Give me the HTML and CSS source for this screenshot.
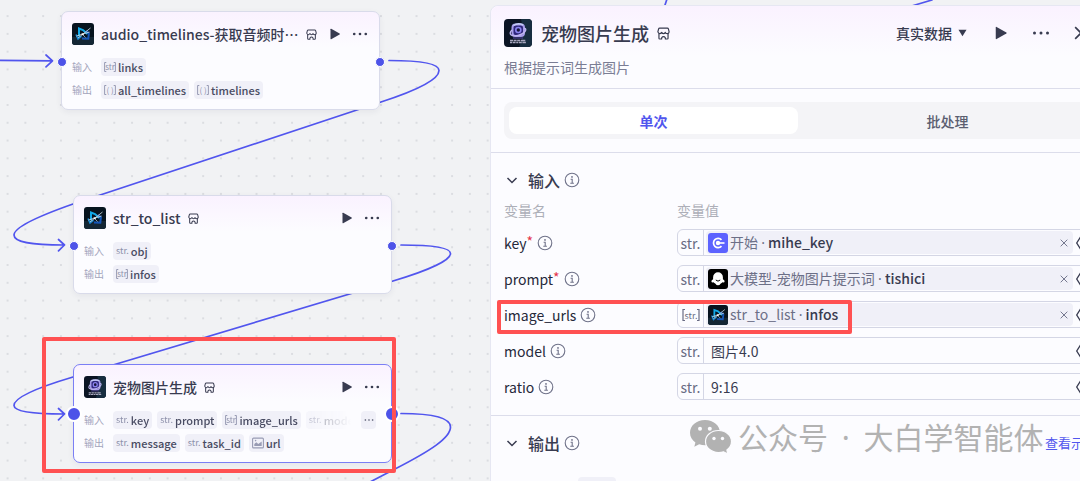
FILE: index.html
```html
<!DOCTYPE html>
<html lang="zh-CN">
<head>
    <meta charset="UTF-8">
    <title>宠物图片生成</title>
    <link rel="stylesheet" href="styles.css">
</head>
<body>
    <svg class="symbols" aria-hidden="true">
        <symbol id="store" viewBox="0 0 12 12">
            <path d="M2.500 1h7q.8 0 1 .8l.7 2.700Q11 6.200 9.500 6.200T7.700 5Q7 6.200 6 6.200T4.300 5Q3.500 6.200 2.500 6.200T.8 4.500l.7-2.700Q1.700 1 2.500 1z" fill="none" stroke="currentColor" stroke-width="1.100" stroke-linejoin="round"/>
            <path d="M1.800 6.300v4q0 .8.8.8h1.700V9.900q.7-1.100 1.700-1.100t1.700 1.100v1.200h1.700q.8 0 .8-.8v-4" fill="none" stroke="currentColor" stroke-width="1.100" stroke-linejoin="round"/>
        </symbol>
        <symbol id="play" viewBox="0 0 12 12">
            <path d="M1.500 1.200v9.600q0 .7.700.4l8.400-4.700q.7-.5 0-1L2.200.8q-.7-.3-.7.4z" fill="currentColor"/>
        </symbol>
        <symbol id="dots" viewBox="0 0 18 6">
            <g fill="currentColor"><circle cx="2.500" cy="3" r="1.500"/><circle cx="9" cy="3" r="1.500"/><circle cx="15.500" cy="3" r="1.500"/></g>
        </symbol>
        <symbol id="info" viewBox="0 0 16 16">
            <circle cx="8" cy="8" r="6.800" fill="none" stroke="currentColor" stroke-width="1.100"/>
            <circle cx="8" cy="4.900" r=".9" fill="currentColor"/>
            <path d="M6.600 7.200H8.200V11M6.300 11.200h3.600" fill="none" stroke="currentColor" stroke-width="1.100"/>
        </symbol>
        <symbol id="chevron" viewBox="0 0 12 12">
            <path d="M1.500 4L6 8.500L10.500 4" fill="none" stroke="currentColor" stroke-width="1.500"/>
        </symbol>
        <symbol id="cross" viewBox="0 0 12 12">
            <path d="M1 1l10 10M11 1L1 11" fill="none" stroke="currentColor" stroke-width="1.400"/>
        </symbol>
        <symbol id="gear" viewBox="0 0 16 16">
            <path d="M4.500 2h7L15.300 8l-3.800 6h-7L.7 8z" fill="none" stroke="currentColor" stroke-width="1.400" stroke-linejoin="round"/>
            <circle cx="8" cy="8" r="2.300" fill="none" stroke="currentColor" stroke-width="1.400"/>
        </symbol>
        <symbol id="image" viewBox="0 0 12 12">
            <rect x=".6" y="1.100" width="10.800" height="9.800" rx="1" fill="none" stroke="currentColor" stroke-width="1.100"/>
            <path d="M2.300 9V7l2-1.800L6.300 7l3.400-2.600V9z" fill="currentColor"/>
            <circle cx="3.600" cy="3.600" r=".8" fill="currentColor"/>
        </symbol>
        <symbol id="brackets" viewBox="0 0 12 12">
            <path d="M2.300 1.500H.6v9h1.700M9.700 1.500h1.700v9H9.700" fill="none" stroke="currentColor"/>
        </symbol>
        <symbol id="cut" viewBox="0 0 22 22">
            <rect width="22" height="22" rx="3" fill="#07131f"/>
            <path d="M0 14h22v5a3 3 0 0 1-3 3H3a3 3 0 0 1-3-3z" fill="#142634"/>
            <path d="M7 13.500L7 5.500l4 1.500 4.500 4" fill="none" stroke="#12a9e8" stroke-width="2"/>
            <path d="M10 15.500l6.300.2.600-5.400-3-2.300" fill="none" stroke="#1455b8" stroke-width="2"/>
            <path d="M4 11.500l2 4.500 3.500-2.800" fill="none" stroke="#1688d4" stroke-width="1.500"/>
            <path d="M18.500 5L6 15M17.500 9L4.500 13" stroke="#d9e6ee" stroke-width=".8"/>
            <path d="M9.500 10.500l4 4" stroke="#a4c3d6" stroke-width=".8"/>
            <circle cx="10.800" cy="11.300" r="1" fill="#fff"/>
        </symbol>
        <symbol id="pet" viewBox="0 0 28 28">
            <rect width="28" height="28" rx="4" fill="#0b1424"/>
            <path d="M17 0h7a4 4 0 0 1 4 4v20a4 4 0 0 1-4 4h-9l5-13z" fill="#172d40"/>
            <rect x="8.500" y="5.500" width="11.500" height="11.500" rx="3" fill="#30277c" stroke="#a69be9" stroke-width="2"/>
            <path d="M8 11C4 15 7 18 14 16.500S24 9 20 9.500" fill="none" stroke="#beb5f0" stroke-width="1.400"/>
            <circle cx="14.300" cy="11" r="2.500" fill="#171437" stroke="#8a82ee" stroke-width="1.600"/>
            <path d="M9.500 6.500Q14 3.500 19 6" fill="none" stroke="#c5cdf7" stroke-width="1.500"/>
            <path d="M6 21.500h3m.6 0h3m.6 0h3m.6 0h4.500M6 23.500h2m.6 0h3m.6 0h2m.6 0h3m.6 0h3.500" stroke="#a6a5bd" stroke-width="1.500"/>
            <path d="M9 19h10" stroke="#5c4cac"/>
        </symbol>
        <symbol id="start" viewBox="0 0 20 20">
            <rect width="20" height="20" rx="3" fill="#5c62ff"/>
            <path d="M13.500 6.900A4.600 4.600 0 1 0 13.500 13.100" fill="none" stroke="#fff" stroke-width="1.700"/>
            <circle cx="10" cy="10" r="2.200" fill="#fff"/>
            <path d="M10 10h6.500" stroke="#fff" stroke-width="1.600"/>
        </symbol>
        <symbol id="llm" viewBox="0 0 20 20">
            <rect width="20" height="20" rx="3" fill="#000"/>
            <path d="M10 3.300a4.900 4.900 0 0 1 4.900 4.900v2q1.800 1 1.700 2.300-.1 1.300-2.100.8-.7 1-2 1.400-.8 1.500-2.500 1.500t-2.500-1.500q-1.300-.4-2-1.400-2 .5-2.100-.8-.1-1.300 1.700-2.300v-2A4.900 4.900 0 0 1 10 3.300z" fill="#fff"/>
            <path d="M7.800 11q2.200 2.300 4.400 0" fill="none" stroke="#000"/>
        </symbol>
    </svg>

    <main class="workspace">
        <section class="canvas">
            <svg class="edges" width="100%" height="100%" aria-hidden="true">
                <defs>
                    <pattern id="grid" x="-1.300" y="7.200" width="17.780" height="17.780" patternUnits="userSpaceOnUse">
                        <circle cx="8.900" cy="8.900" r=".8" fill="#bfc2c9"/>
                    </pattern>
                </defs>
                <rect width="100%" height="100%" fill="url(#grid)"/>
                <g fill="none" stroke="#5155ee" stroke-width="1.700" stroke-linecap="round" stroke-linejoin="round">
                    <path d="M0 60.300L52 60.800M46 55l6.500 5.800-6.500 6"/>
                    <path d="M389 60.500C425 60.500 439 64 439 70.500C439 79 418 90 381 102L73 204C36 217 14 228 14 235C14 242 30 245 64 245M58.500 239.500l6 5.500-6 5.800"/>
                    <path d="M401 245C436 245 450.500 248 450.500 253.500C450.500 260 430 270 393 281L73 377C36 388 14 398 14 405.500C14 411 30 414 64 414M58.500 408.500l6 5.500-6 5.800"/>
                    <path d="M401 413.500C436 413.500 450.500 419 450.500 427C450.500 438 430 451 395 469L370 482"/>
                    <path d="M668-4L664 8M932 0L905 8"/>
                </g>
            </svg>

            <article class="node node-audio">
                <header class="node-header">
                    <svg class="node-icon"><use href="#cut"/></svg>
                    <h3>audio_timelines-获取音频时…</h3>
                    <svg class="store"><use href="#store"/></svg>
                    <button class="node-play" aria-label="运行"><svg><use href="#play"/></svg></button>
                    <button class="node-more" aria-label="更多"><svg><use href="#dots"/></svg></button>
                </header>
                <div class="node-row">
                    <span class="row-name">输入</span>
                    <span class="chip"><svg class="array" viewBox="0 0 12 12"><use href="#brackets"/><text x="6" y="9">str</text></svg>links</span>
                </div>
                <div class="node-row">
                    <span class="row-name">输出</span>
                    <span class="chip"><svg class="array" viewBox="0 0 12 12"><use href="#brackets"/><text x="6" y="9">( )</text></svg>all_timelines</span>
                    <span class="chip"><svg class="array" viewBox="0 0 12 12"><use href="#brackets"/><text x="6" y="9">( )</text></svg>timelines</span>
                </div>
                <i class="port port-in"></i>
                <i class="port port-out"></i>
            </article>

            <article class="node node-list">
                <header class="node-header">
                    <svg class="node-icon"><use href="#cut"/></svg>
                    <h3>str_to_list</h3>
                    <svg class="store"><use href="#store"/></svg>
                    <button class="node-play" aria-label="运行"><svg><use href="#play"/></svg></button>
                    <button class="node-more" aria-label="更多"><svg><use href="#dots"/></svg></button>
                </header>
                <div class="node-row">
                    <span class="row-name">输入</span>
                    <span class="chip"><small>str.</small>obj</span>
                </div>
                <div class="node-row">
                    <span class="row-name">输出</span>
                    <span class="chip"><svg class="array" viewBox="0 0 12 12"><use href="#brackets"/><text x="6" y="9">str</text></svg>infos</span>
                </div>
                <i class="port port-in"></i>
                <i class="port port-out"></i>
            </article>

            <article class="node node-pet selected">
                <header class="node-header">
                    <svg class="node-icon"><use href="#pet"/></svg>
                    <h3>宠物图片生成</h3>
                    <svg class="store"><use href="#store"/></svg>
                    <button class="node-play" aria-label="运行"><svg><use href="#play"/></svg></button>
                    <button class="node-more" aria-label="更多"><svg><use href="#dots"/></svg></button>
                </header>
                <div class="node-row">
                    <span class="row-name">输入</span>
                    <div class="chips-fade">
                        <span class="chip"><small>str.</small>key</span>
                        <span class="chip"><small>str.</small>prompt</span>
                        <span class="chip"><svg class="array" viewBox="0 0 12 12"><use href="#brackets"/><text x="6" y="9">str</text></svg>image_urls</span>
                        <span class="chip faded"><small>str.</small>model</span>
                    </div>
                    <button class="chip chip-more" aria-label="更多变量"><svg><use href="#dots"/></svg></button>
                </div>
                <div class="node-row">
                    <span class="row-name">输出</span>
                    <span class="chip"><small>str.</small>message</span>
                    <span class="chip"><small>str.</small>task_id</span>
                    <span class="chip"><svg class="picture"><use href="#image"/></svg>url</span>
                </div>
                <i class="port port-in"></i>
                <i class="port port-out"></i>
            </article>

            <div class="mark mark-node"></div>
        </section>

        <aside class="panel">
            <header class="panel-header">
                <div class="panel-title">
                    <svg class="panel-icon"><use href="#pet"/></svg>
                    <h2>宠物图片生成</h2>
                    <svg class="store"><use href="#store"/></svg>
                    <div class="actions">
                        <div class="mode">
                            <select aria-label="数据模式"><option>真实数据</option></select>
                            <svg class="caret" viewBox="0 0 10 8"><path d="M.5.500h9L5 7.500z" fill="currentColor"/></svg>
                        </div>
                        <button aria-label="运行"><svg class="play"><use href="#play"/></svg></button>
                        <button aria-label="更多"><svg class="dots"><use href="#dots"/></svg></button>
                        <button aria-label="关闭"><svg class="close"><use href="#cross"/></svg></button>
                    </div>
                </div>
                <p>根据提示词生成图片</p>
            </header>

            <div class="tabs-section">
                <div class="tabs">
                    <button class="tab active">单次</button>
                    <button class="tab">批处理</button>
                </div>
            </div>

            <section class="inputs">
                <h4><svg class="chevron"><use href="#chevron"/></svg>输入<svg class="info"><use href="#info"/></svg></h4>
                <div class="field field-head"><span>变量名</span><span>变量值</span></div>
                <div class="field">
                    <label for="key">key<em>*</em><svg class="info"><use href="#info"/></svg></label>
                    <div class="value">
                        <span class="type">str.</span>
                        <div class="ref">
                            <button class="ref-pick" id="key"><svg class="ref-icon"><use href="#start"/></svg><span>开始 <i class="sep">·</i> <b>mihe_key</b></span></button>
                            <button class="clear" aria-label="清除 key"><svg><use href="#cross"/></svg></button>
                        </div>
                        <button class="setting" aria-label="设置"><svg><use href="#gear"/></svg></button>
                    </div>
                </div>
                <div class="field">
                    <label for="prompt">prompt<em>*</em><svg class="info"><use href="#info"/></svg></label>
                    <div class="value">
                        <span class="type">str.</span>
                        <div class="ref">
                            <button class="ref-pick" id="prompt"><svg class="ref-icon"><use href="#llm"/></svg><span>大模型-宠物图片提示词 <i class="sep">·</i> <b>tishici</b></span></button>
                            <button class="clear" aria-label="清除 prompt"><svg><use href="#cross"/></svg></button>
                        </div>
                        <button class="setting" aria-label="设置"><svg><use href="#gear"/></svg></button>
                    </div>
                </div>
                <div class="field">
                    <label for="image_urls">image_urls<svg class="info"><use href="#info"/></svg></label>
                    <div class="value">
                        <span class="type">
                            <svg class="type-array" viewBox="0 0 18 14"><path d="M3 1.500H1v11h2M15 1.500h2v11h-2" fill="none" stroke="currentColor" stroke-width="1.200"/><text x="9" y="11">str.</text></svg>
                        </span>
                        <div class="ref">
                            <button class="ref-pick" id="image_urls"><svg class="ref-icon"><use href="#cut"/></svg><span>str_to_list <i class="sep">·</i> <b>infos</b></span></button>
                            <button class="clear" aria-label="清除 image_urls"><svg><use href="#cross"/></svg></button>
                        </div>
                        <button class="setting" aria-label="设置"><svg><use href="#gear"/></svg></button>
                    </div>
                    <div class="mark mark-field"></div>
                </div>
                <div class="field">
                    <label for="model">model<svg class="info"><use href="#info"/></svg></label>
                    <div class="value">
                        <span class="type">str.</span>
                        <input id="model" type="text" value="图片4.0">
                        <button class="setting" aria-label="设置"><svg><use href="#gear"/></svg></button>
                    </div>
                </div>
                <div class="field">
                    <label for="ratio">ratio<svg class="info"><use href="#info"/></svg></label>
                    <div class="value">
                        <span class="type">str.</span>
                        <input id="ratio" type="text" value="9:16">
                        <button class="setting" aria-label="设置"><svg><use href="#gear"/></svg></button>
                    </div>
                </div>
            </section>

            <section class="outputs">
                <h4><svg class="chevron"><use href="#chevron"/></svg>输出<svg class="info"><use href="#info"/></svg><a href="#">查看示例</a></h4>
                <div class="output-row"><span class="output-type"></span></div>
            </section>

            <div class="watermark">
                <svg viewBox="0 0 42 34">
                    <path d="M15 0C6.500 0 0 5.700 0 12.700c0 4 2.100 7.500 5.400 9.800L4.300 26.800l4.900-2.500q2.800.9 6 .9C23.500 25 30 19.700 30 12.700S23.500 0 15 0z" fill="#b2b2b2"/>
                    <path d="M28.500 10.500c7.300 0 13 4.900 13 11 0 3.400-1.800 6.500-4.600 8.500l.9 4-4.200-2.200q-2.400.7-5.100.7c-7.300 0-13-4.900-13-11s5.700-11 13-11z" fill="#b2b2b2" stroke="#fcfcff" stroke-width="1.200"/>
                    <g fill="#fcfcff"><circle cx="10" cy="8.800" r="2"/><circle cx="19.800" cy="8.800" r="2"/><circle cx="24" cy="18.500" r="1.700"/><circle cx="32.500" cy="18.500" r="1.700"/></g>
                </svg>
                <span>公众号 <i class="sep">·</i> 大白学智能体</span>
            </div>
        </aside>
    </main>
</body>
</html>
```
FILE: styles.css
```css
* {
    box-sizing: border-box;
}

body {
    margin: 0;
    overflow: hidden;
    font-family: "Noto Sans CJK SC", sans-serif;
    font-size: 14px;
    line-height: 20px;
    color: #383b50;
    background-color: #f1f2f4;
}

h2, h3, h4, p {
    margin: 0;
    font-weight: 500;
}

button, input, select {
    margin: 0;
    padding: 0;
    border: none;
    background: none;
    font: inherit;
    color: inherit;
}

button {
    display: flex;
    align-items: center;
    justify-content: center;
    cursor: pointer;
}

svg {
    display: block;
    flex: none;
}

.symbols {
    position: absolute;
    width: 0;
    height: 0;
}

/* the panel column lies over the right part of the canvas */
.workspace {
    display: grid;
    grid-template-columns: 490px 1fr;
    height: 100vh;
    overflow: hidden;
}

.canvas {
    position: relative;
    grid-area: 1 / 1 / 2 / 3;
}

/* nodes */
.node {
    position: absolute;
    width: 319px;
    padding: 11px 10px 10px;
    border: 1px solid #d9dbea;
    border-radius: 7px;
    background: linear-gradient(#faf2ff, #fcfcff 36px);
    box-shadow: 0 2px 6px rgba(30, 35, 70, 0.06);
}

.node-audio {
    left: 61px;
    top: 11px;
}

.node-list {
    left: 73px;
    top: 195px;
}

.node-pet {
    left: 73px;
    top: 364px;
}

.node.selected {
    border-color: #7b7ff5;
}

.node-header {
    display: flex;
    align-items: center;
    height: 22px;
    margin-bottom: 13px;
}

.node-header h3 {
    margin: 0 7px;
    font-size: 14px;
    white-space: nowrap;
}

.node-icon {
    width: 22px;
    height: 22px;
}

.store {
    width: 13px;
    height: 13px;
}

.node-header .store {
    width: 11px;
    height: 11px;
}

.node-play {
    width: 20px;
    margin-left: auto;
}

.node-play svg {
    width: 12px;
    height: 12px;
}

.node-more {
    width: 18px;
    margin: 0 0 0 6px;
}

.node-more svg {
    width: 16px;
    height: 6px;
}

.node-row {
    display: flex;
    align-items: center;
    gap: 5px;
    height: 18px;
}

.node-row + .node-row {
    margin-top: 5px;
}

.row-name {
    width: 24px;
    font-size: 10px;
    color: #a3a5bc;
}

.chip {
    display: flex;
    flex: none;
    align-items: center;
    gap: 2px;
    height: 18px;
    padding: 0 3px;
    border-radius: 4px;
    background-color: #f0f0f8;
    font-size: 11px;
    font-weight: 500;
    color: #484b62;
}

.chip small {
    font-size: 9px;
    font-weight: 400;
    color: #8d90aa;
}

.array {
    width: 12px;
    height: 12px;
    font-size: 8px;
    font-weight: 400;
    text-anchor: middle;
    color: #989bb3;
    fill: #8d90aa;
}

.picture {
    width: 12px;
    height: 12px;
    color: #989bb3;
}

.chips-fade {
    display: flex;
    flex: 1;
    gap: 5px;
    overflow: hidden;
    mask-image: linear-gradient(to right, #000 78%, transparent 98%);
}

.faded {
    opacity: 0.6;
}

.chip-more {
    width: 15px;
    padding: 0;
    margin-right: 5px;
}

.chip-more svg {
    width: 10px;
    height: 6px;
}

.port {
    position: absolute;
    top: 45px;
    width: 10px;
    height: 10px;
    border: 1px solid #fff;
    border-radius: 50%;
    background-color: #4d53e8;
}

.port-in {
    left: -5px;
}

.port-out {
    right: -6px;
}

.selected .port {
    top: 41px;
    width: 16px;
    height: 16px;
    border-width: 2px;
}

.selected .port-in {
    left: -8px;
}

.selected .port-out {
    right: -9px;
}

/* red highlight frames */
.mark {
    position: absolute;
    border: 4px solid #ff5152;
    border-radius: 2px;
    pointer-events: none;
}

.mark-node {
    left: 42px;
    top: 337px;
    width: 354px;
    height: 136px;
}

.mark-field {
    left: -7px;
    top: -1px;
    width: 355px;
    height: 34px;
}

/* settings panel, runs past the right edge of the window */
.panel {
    position: relative;
    grid-area: 1 / 2 / 2 / 3;
    margin: 5px -31px 0 0;
    border: 1px solid #e6e7f2;
    border-radius: 8px 8px 0 0;
    background-color: #fcfcff;
}

.panel-header {
    padding: 13px;
    height: 83px;
    border-bottom: 1px solid #dcddeb;
    border-radius: 8px 8px 0 0;
    background: linear-gradient(#faf2ff, #fcfcff 50px);
}

.panel-title {
    display: flex;
    align-items: center;
    height: 28px;
}

.panel-icon {
    width: 28px;
    height: 28px;
}

.panel-title h2 {
    margin: 0 8px 0 9px;
    font-size: 18px;
}

.panel-header p {
    margin-top: 10px;
    font-size: 14px;
    font-weight: 400;
    color: #7a7d94;
}

.actions {
    display: flex;
    align-items: center;
    gap: 12px;
    margin: 0 2px 0 auto;
}

.mode {
    display: flex;
    align-items: center;
    gap: 6px;
    margin-right: 8px;
}

.mode select {
    appearance: none;
    font-weight: 500;
}

.caret {
    width: 9px;
    height: 8px;
}

.actions button {
    width: 28px;
    height: 28px;
}

.play {
    width: 14px;
    height: 14px;
}

.dots {
    width: 20px;
    height: 6px;
}

.close {
    width: 14px;
    height: 14px;
}

.tabs-section {
    padding: 13px;
    border-bottom: 1px solid #dcddeb;
}

.tabs {
    display: flex;
    gap: 5px;
    padding: 5px;
    border-radius: 8px;
    background-color: #f4f4f7;
}

.tab {
    flex: 1;
    height: 27px;
    border-radius: 8px;
    font-weight: 500;
    color: #5b5e70;
}

.tab.active {
    background-color: #fff;
    font-weight: 700;
    color: #5156ee;
}

.inputs, .outputs {
    padding: 14px 13px;
}

.inputs {
    padding-bottom: 15px;
    border-bottom: 1px solid #dcddeb;
}

h4 {
    display: flex;
    align-items: center;
    height: 26px;
    padding-left: 2px;
    font-size: 16px;
}

.chevron {
    width: 12px;
    height: 12px;
    margin-right: 10px;
}

.info {
    width: 16px;
    height: 16px;
    margin-left: 4px;
    color: #6f7289;
}

.field {
    position: relative;
    display: grid;
    grid-template-columns: 173px 1fr;
    align-items: center;
    margin-bottom: 9px;
}

.field:last-child {
    margin-bottom: 0;
}

.field-head {
    margin: 7px 0 9px;
    font-size: 14px;
    color: #adafb8;
}

.field label {
    display: flex;
    align-items: center;
    color: #25283a;
}

.field em {
    margin-top: -4px;
    font-style: normal;
    color: #e5344a;
}

.value {
    display: flex;
    align-items: center;
    height: 27px;
    padding-right: 4px;
    border: 1px solid #d4d6e5;
    border-radius: 6px;
}

.type {
    display: flex;
    align-items: center;
    justify-content: center;
    width: 26px;
    height: 25px;
    border-right: 1px solid #d4d6e5;
    color: #696c84;
}

.type-array {
    width: 18px;
    height: 14px;
    font-size: 9px;
    text-anchor: middle;
    fill: currentColor;
}

.ref {
    display: flex;
    flex: 1;
    align-items: center;
    height: 23px;
    margin: 0 3px 0 2px;
    border-radius: 4px;
    background-color: #f0f0f8;
}

.ref-pick {
    flex: 1;
    gap: 2px;
    justify-content: flex-start;
    padding-left: 2px;
    color: #6c6f87;
}

.ref-pick b {
    font-weight: 500;
    color: #383b50;
}

/* narrow middle dot, the CJK one is full width */
.sep {
    font-family: "Noto Sans", sans-serif;
    font-style: normal;
}

.ref-icon {
    width: 20px;
    height: 20px;
}

.clear {
    width: 18px;
    height: 18px;
    color: #6c6f87;
}

.clear svg {
    width: 8px;
    height: 8px;
}

.value input {
    flex: 1;
    min-width: 0;
    padding-left: 7px;
    outline: none;
}

.setting svg {
    width: 16px;
    height: 16px;
}

.outputs a {
    margin-left: auto;
    font-size: 13px;
    font-weight: 400;
    color: #5156ee;
    text-decoration: none;
}

.output-row {
    display: flex;
    padding: 21px 74px;
}

.output-type {
    width: 38px;
    height: 18px;
    border-radius: 4px;
    background-color: #f0f0f8;
}

.watermark {
    position: absolute;
    left: 199px;
    top: 412px;
    display: flex;
    align-items: center;
    gap: 6px;
    font-size: 30px;
    font-weight: 400;
    line-height: 36px;
    white-space: nowrap;
    color: #b2b2b2;
    pointer-events: none;
}

.watermark .sep {
    margin: 0 7px;
}

.watermark svg {
    width: 42px;
    height: 34px;
}
```
